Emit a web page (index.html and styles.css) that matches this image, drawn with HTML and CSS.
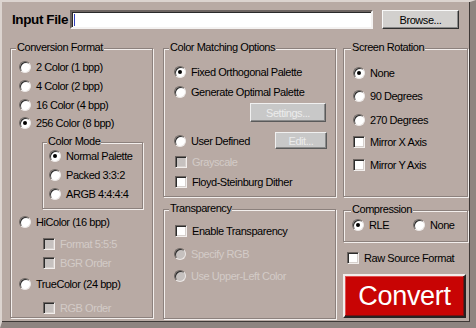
FILE: index.html
```html
<!DOCTYPE html>
<html>
<head>
<meta charset="utf-8">
<link rel="stylesheet" href="styles.css">
</head>
<body>
<div class="win">
  <div class="toprow">
    <span class="lbl">Input File</span>
    <div class="textbox"><span class="caret"></span></div>
    <div class="btn browse">Browse...</div>
  </div>
  <div class="main">
    <div class="col col1">
      <div class="group g-conv">
        <span class="title">Conversion Format</span>
        <div class="opt"><span class="radio"></span>2 Color (1 bpp)</div>
        <div class="opt m3"><span class="radio"></span>4 Color (2 bpp)</div>
        <div class="opt m3"><span class="radio"></span>16 Color (4 bpp)</div>
        <div class="opt m2"><span class="radio on"></span>256 Color (8 bpp)</div>
        <div class="group g-mode">
          <span class="title">Color Mode</span>
          <div class="opt"><span class="radio on"></span>Normal Palette</div>
          <div class="opt m3"><span class="radio"></span>Packed 3:3:2</div>
          <div class="opt m3"><span class="radio"></span>ARGB 4:4:4:4</div>
        </div>
        <div class="opt m5"><span class="radio"></span>HiColor (16 bpp)</div>
        <div class="opt sub m6 dis"><span class="check"></span>Format 5:5:5</div>
        <div class="opt sub m3 dis"><span class="check"></span>BGR Order</div>
        <div class="opt m5"><span class="radio"></span>TrueColor (24 bpp)</div>
        <div class="opt sub m8 dis"><span class="check"></span>RGB Order</div>
      </div>
    </div>
    <div class="col col2">
      <div class="group g-match">
        <span class="title">Color Matching Options</span>
        <div class="opt"><span class="radio on"></span>Fixed Orthogonal Palette</div>
        <div class="opt m4"><span class="radio"></span>Generate Optimal Palette</div>
        <div class="btnrow"><div class="btn dbtn settings">Settings...</div></div>
        <div class="opt userrow"><span class="radio"></span>User Defined<div class="btn dbtn edit">Edit...</div></div>
        <div class="opt m5 dis cb1"><span class="check"></span>Grayscale</div>
        <div class="opt m4 cb1"><span class="check"></span>Floyd-Steinburg Dither</div>
      </div>
      <div class="group g-trans">
        <span class="title">Transparency</span>
        <div class="opt cb1"><span class="check"></span>Enable Transparency</div>
        <div class="opt m7 dis"><span class="radio"></span>Specify RGB</div>
        <div class="opt m6 dis"><span class="radio"></span>Use Upper-Left Color</div>
      </div>
    </div>
    <div class="col col3">
      <div class="group g-rot">
        <span class="title">Screen Rotation</span>
        <div class="opt"><span class="radio on"></span>None</div>
        <div class="opt m7"><span class="radio"></span>90 Degrees</div>
        <div class="opt m8"><span class="radio"></span>270 Degrees</div>
        <div class="opt m6"><span class="check"></span>Mirror X Axis</div>
        <div class="opt m7"><span class="check"></span>Mirror Y Axis</div>
      </div>
      <div class="group g-comp">
        <span class="title">Compression</span>
        <div class="comprow">
          <div class="opt rle"><span class="radio on"></span>RLE</div>
          <div class="opt"><span class="radio"></span>None</div>
        </div>
      </div>
      <div class="opt raw"><span class="check"></span>Raw Source Format</div>
      <div class="convert">Convert</div>
    </div>
  </div>
</div>
</body>
</html>
```

FILE: styles.css
```css
html, body {
  margin: 0;
  padding: 0;
  background: #b8aaa4;
}
.win {
  width: 476px;
  height: 328px;
  box-sizing: border-box;
  background: #b8aaa4;
  border-top: 2px solid #dcd4d0;
  border-left: 2px solid #dcd4d0;
  border-right: 6px solid #8e8480;
  border-bottom: 6px solid #8e8480;
  box-shadow: inset -1px -1px 0 #3e3836;
  padding: 8px 0 0 8px;
  font-family: "Liberation Sans", Arial, sans-serif;
  font-size: 11px;
  letter-spacing: -0.45px;
  color: #000;
  display: flex;
  flex-direction: column;
}
.toprow {
  display: flex;
  align-items: center;
  height: 19px;
}
.lbl {
  width: 58px;
  margin-left: 2px;
  font-weight: bold;
  font-size: 13.5px;
  letter-spacing: -0.4px;
}
.textbox {
  width: 299px;
  height: 15px;
  background: #fff;
  border: 2px solid;
  border-color: #6d6461 #f4f2f1 #f4f2f1 #6d6461;
  box-shadow: inset 1px 1px 0 #2a2a2a;
  position: relative;
}
.caret {
  position: absolute;
  left: 2px;
  top: 2px;
  width: 1px;
  height: 12px;
  background: #3040c0;
}
.btn {
  box-sizing: border-box;
  display: flex;
  align-items: center;
  justify-content: center;
  background: #d2d0ce;
  border: 1px solid;
  border-color: #f8f8f8 #303030 #303030 #f8f8f8;
  box-shadow: inset -1px -1px 0 #8a8a8a;
  color: #000;
}
.browse {
  width: 77px;
  height: 19px;
  margin-left: 9px;
}
.dbtn {
  background: #c8c8c8;
  color: #ececec;
  border-color: #f0f0f0 #5a5a5a #5a5a5a #f0f0f0;
}
.main {
  display: flex;
  margin-top: 19px;
}
.col {
  display: flex;
  flex-direction: column;
}
.col1 { width: 143px; }
.col2 { width: 173px; margin-left: 10px; }
.col3 { width: 125px; margin-left: 7px; }
.group {
  position: relative;
  box-sizing: border-box;
  border: 1px solid #8c817d;
  box-shadow: inset 1px 1px 0 #f3efed, 1px 1px 0 #f3efed;
  display: flex;
  flex-direction: column;
}
.title {
  position: absolute;
  top: -8px;
  left: 5px;
  padding: 0 1px;
  line-height: 13px;
  background: #b8aaa4;
}
.opt {
  display: flex;
  align-items: center;
  height: 16px;
  white-space: nowrap;
}
.m2 { margin-top: 2px; }
.m3 { margin-top: 3px; }
.m4 { margin-top: 4px; }
.m5 { margin-top: 5px; }
.m6 { margin-top: 6px; }
.m7 { margin-top: 7px; }
.m8 { margin-top: 8px; }
.radio {
  box-sizing: border-box;
  flex: none;
  width: 12px;
  height: 12px;
  margin-right: 5px;
  border-radius: 50%;
  background: #fff;
  border: 1px solid;
  border-color: #6e6662 #ece8e6 #ece8e6 #6e6662;
  box-shadow: inset 1px 1px 0 #2c2c2c;
  position: relative;
}
.radio.on::after {
  content: "";
  position: absolute;
  left: 3px;
  top: 3px;
  width: 4px;
  height: 4px;
  border-radius: 50%;
  background: #000;
}
.check {
  box-sizing: border-box;
  flex: none;
  width: 12px;
  height: 12px;
  margin-right: 5px;
  background: #fff;
  border: 1px solid;
  border-color: #6e6662 #f2eeec #f2eeec #6e6662;
  box-shadow: inset 1px 1px 0 #2c2c2c, inset -1px -1px 0 #d6d0cd;
}
.dis { color: #d3cbc7; }
.dis .radio, .dis .check { background: #c6c1bf; }
.g-conv {
  height: 270px;
  padding: 10px 0 0 8px;
}
.sub { margin-left: 24px; }
.g-mode {
  width: 101px;
  height: 67px;
  margin: 11px 0 0 23px;
  padding: 5px 0 0 6px;
}
.g-mode .title { left: 4px; }
.g-match {
  height: 149px;
  padding: 15px 8px 0 10px;
}
.btnrow {
  display: flex;
  justify-content: flex-end;
  margin-top: 3px;
}
.settings {
  width: 76px;
  height: 19px;
  margin-right: 1px;
}
.userrow {
  height: 17px;
  margin-top: 10px;
}
.edit {
  width: 52px;
  height: 17px;
  margin-left: auto;
}
.cb1 .check { margin-left: 1px; }
.g-trans {
  height: 110px;
  margin-top: 12px;
  padding: 13px 0 0 10px;
}
.g-rot {
  height: 149px;
  padding: 16px 0 0 9px;
}
.g-comp {
  height: 32px;
  margin-top: 13px;
  padding: 6px 0 0 8px;
}
.g-rot .title, .g-comp .title { left: 7px; }
.comprow {
  display: flex;
}
.rle { width: 61px; }
.raw {
  margin-top: 8px;
  margin-left: 4px;
}
.convert {
  box-sizing: border-box;
  width: 123px;
  height: 44px;
  margin-top: 8px;
  background: #c80404;
  border: 2px solid;
  border-color: #f2eeec #262222 #262222 #f2eeec;
  box-shadow: inset -1px -1px 0 #7a1010, inset 1px 1px 0 #e05050;
  color: #fff;
  font-size: 27px;
  letter-spacing: -0.3px;
  display: flex;
  align-items: center;
  justify-content: center;
}
```
